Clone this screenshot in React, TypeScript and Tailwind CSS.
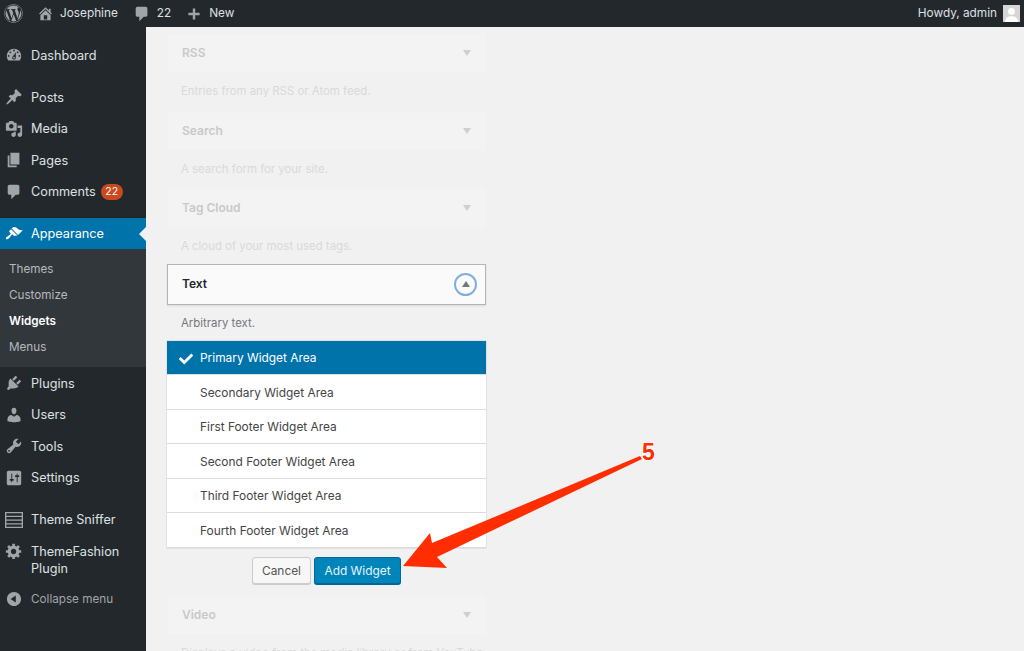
import { FaWordpress, FaCheck } from "react-icons/fa"

const font = { fontFamily: "Inter, sans-serif" }

const paths: Record<string, string> = {
  home: "M16 8.5l1.53 1.53-1.06 1.06L10 4.62l-6.47 6.47-1.06-1.06L10 2.5l4 4v-2h2v4zm-6-2.46l6 5.99V18H4v-5.97zM12 17v-5H8v5h4z",
  comment: "M5 2h9c1.1 0 2 .9 2 2v7c0 1.1-.9 2-2 2h-2l-5 5v-5H5c-1.1 0-2-.9-2-2V4c0-1.1.9-2 2-2z",
  plus: "M17 8.5v3h-5.5V17h-3v-5.5H3v-3h5.5V3h3v5.5z",
  dashboard: "M3.76 16h12.48c1.1-1.37 1.76-3.11 1.76-5 0-4.42-3.58-8-8-8s-8 3.58-8 8c0 1.89.66 3.63 1.76 5zM10 4c.55 0 1 .45 1 1s-.45 1-1 1-1-.45-1-1 .45-1 1-1zM6 6c.55 0 1 .45 1 1s-.45 1-1 1-1-.45-1-1 .45-1 1-1zm8 0c.55 0 1 .45 1 1s-.45 1-1 1-1-.45-1-1 .45-1 1-1zm-5.37 5.55L12 7v6c0 1.1-.9 2-2 2s-2-.9-2-2c0-.57.24-1.08.63-1.45zM4 10c.55 0 1 .45 1 1s-.45 1-1 1-1-.45-1-1 .45-1 1-1zm12 0c.55 0 1 .45 1 1s-.45 1-1 1-1-.45-1-1 .45-1 1-1zm-5 3c0-.55-.45-1-1-1s-1 .45-1 1 .45 1 1 1 1-.45 1-1z",
  post: "M10.44 3.02l1.82-1.82 6.36 6.35-1.83 1.82c-1.05-.68-2.48-.57-3.41.36l-.75.75c-.92.93-1.04 2.35-.35 3.41l-1.83 1.82-2.41-2.41-2.8 2.79c-.42.42-3.38 2.71-3.8 2.29s1.86-3.39 2.28-3.81l2.79-2.79L4.1 9.36l1.83-1.82c1.05.69 2.48.57 3.4-.36l.75-.75c.93-.92 1.05-2.35.36-3.41z",
  media: "M13 11V4c0-.55-.45-1-1-1h-1.67L9 1H5L3.67 3H2c-.55 0-1 .45-1 1v7c0 .55.45 1 1 1h10c.55 0 1-.45 1-1zM7 4.5c1.38 0 2.5 1.12 2.5 2.5S8.38 9.5 7 9.5 4.5 8.38 4.5 7 5.62 4.5 7 4.5zM14 6h5v10.5c0 1.38-1.12 2.5-2.5 2.5S14 17.88 14 16.5s1.12-2.5 2.5-2.5c.17 0 .34.02.5.05V9h-3V6zm-4 8.05V13h2v3.5c0 1.38-1.12 2.5-2.5 2.5S7 17.88 7 16.5 8.12 14 9.5 14c.17 0 .34.02.5.05z",
  page: "M6 15V2h10v13H6zm-1 1h8v2H3V5h2v11z",
  appearance: "M14.48 11.06L7.41 3.99l1.5-1.5c.5-.56 2.3-.47 3.51.32 1.21.8 1.43 1.28 2.91 2.1 1.18.64 2.45 1.26 4.45.85zm-.71.71L6.7 4.7 4.93 6.47c-.39.39-.39 1.02 0 1.41l1.06 1.06c.39.39.39 1.03 0 1.42-.6.6-1.43 1.11-2.21 1.69-.35.26-.7.53-1.01.84C1.43 13.23.4 14.84 1.19 15.63c.79.79 2.4-.24 3.74-1.58.3-.3.58-.65.84-1 .57-.78 1.08-1.61 1.69-2.22.39-.39 1.02-.39 1.41 0l1.06 1.06c.39.39 1.02.39 1.41 0z",
  plugin: "M13.11 4.36L9.87 7.6 8 5.73l3.24-3.24c.35-.34 1.05-.2 1.56.32.52.51.66 1.21.31 1.55zm-8 1.77l.91-1.12 9.01 9.01-1.19.84c-.71.71-2.63 1.16-3.82 1.16H6.14L4.9 17.26c-.59.59-1.54.59-2.12 0-.59-.58-.59-1.53 0-2.12l1.24-1.24v-3.88c0-1.13.4-3.19 1.09-3.89zm7.26 3.97l3.24-3.24c.34-.35 1.04-.21 1.55.31.52.51.66 1.21.31 1.55l-3.24 3.25z",
  users: "M10 9.25c-2.27 0-2.73-3.44-2.73-3.44C7 4.02 7.82 2 9.97 2c2.16 0 2.98 2.02 2.71 3.81 0 0-.41 3.44-2.68 3.44zm0 2.57L12.72 10c2.39 0 4.52 2.33 4.52 4.53v2.49s-3.65 1.13-7.24 1.13c-3.65 0-7.24-1.13-7.24-1.13v-2.49c0-2.25 1.94-4.48 4.47-4.48z",
  tools: "M16.68 9.77c-1.34 1.34-3.3 1.67-4.95.99l-5.41 6.52c-.99.99-2.59.99-3.58 0s-.99-2.59 0-3.57l6.52-5.42c-.68-1.65-.35-3.61.99-4.95 1.28-1.28 3.12-1.62 4.72-1.06l-2.89 2.89 2.82 2.82 2.86-2.87c.53 1.58.18 3.39-1.08 4.65zM3.81 16.21c.4.39 1.04.39 1.43 0 .4-.4.4-1.04 0-1.43-.39-.4-1.03-.4-1.43 0-.39.39-.39 1.03 0 1.43z",
  settings: "M18 16V4c0-1.1-.9-2-2-2H4c-1.1 0-2 .9-2 2v12c0 1.1.9 2 2 2h12c1.1 0 2-.9 2-2zM8 11h1c.55 0 1 .45 1 1s-.45 1-1 1H8v1.5c0 .28-.22.5-.5.5s-.5-.22-.5-.5V13H6c-.55 0-1-.45-1-1s.45-1 1-1h1V5.5c0-.28.22-.5.5-.5s.5.22.5.5V11zm5-2h-1c-.55 0-1-.45-1-1s.45-1 1-1h1V5.5c0-.28.22-.5.5-.5s.5.22.5.5V7h1c.55 0 1 .45 1 1s-.45 1-1 1h-1v5.5c0 .28-.22.5-.5.5s-.5-.22-.5-.5V9z",
  list: "M0 1h20v18H0V1zm1.5 1.5v2.8h17V2.5h-17zm0 4.2v2.8h17V6.7h-17zm0 4.2v2.8h17v-2.8h-17zm0 4.2v2.4h17v-2.4h-17z",
  gear: "M18 12h-2.18c-.17.7-.44 1.35-.81 1.93l1.54 1.54-2.1 2.1-1.54-1.54c-.58.36-1.23.63-1.91.79V19H8v-2.18c-.68-.16-1.33-.43-1.91-.79l-1.54 1.54-2.12-2.12 1.54-1.54c-.36-.58-.63-1.23-.79-1.91H1V9.03h2.17c.16-.7.44-1.35.8-1.94L2.43 5.55l2.1-2.1 1.54 1.54c.58-.37 1.24-.64 1.93-.81V2h3v2.18c.68.16 1.33.43 1.91.79l1.54-1.54 2.12 2.12-1.54 1.54c.36.59.64 1.24.8 1.94H18V12zm-8.5 1.5c1.66 0 3-1.34 3-3s-1.34-3-3-3-3 1.34-3 3 1.34 3 3 3z",
  collapse: "M10 2.16c4.33 0 7.84 3.51 7.84 7.84s-3.51 7.84-7.84 7.84S2.16 14.33 2.16 10 5.71 2.16 10 2.16zm2 11.72V6.12L6.18 9.97z",
}

const Dash = ({ name, className }: { name: string; className: string }) => (
  <svg viewBox="0 0 20 20" fill="currentColor" fillRule="evenodd" className={className}>
    <path d={paths[name]} />
  </svg>
)

const MenuRow = ({ icon, label, active, badge }: { icon: string; label: string; active?: boolean; badge?: string }) => (
  <div className={`relative flex h-[31.5px] items-center pl-[5px] text-[12.7px] ${active ? "bg-[#0073aa] text-white" : "text-[#dfe0e1]"}`}>
    <Dash name={icon} className={`size-[18px] shrink-0 ${active ? "text-white" : "text-[#a0a5aa]"}`} />
    <span className="ml-[8px] pt-[1px]">{label}</span>
    {badge && (
      <span className="ml-[5px] flex h-[16px] w-[22px] items-center justify-center rounded-full bg-[#ca4a1f] text-[10.5px] text-white">{badge}</span>
    )}
    {active && (
      <span className="absolute right-0 top-[9px] size-0 border-y-[7px] border-r-[7px] border-y-transparent border-r-[#f1f1f1]" />
    )}
  </div>
)

const Sidebar = () => (
  <aside className="flex w-[146px] shrink-0 flex-col bg-[#23282d] pt-[12.25px]">
    <MenuRow icon="dashboard" label="Dashboard" />
    <div className="h-[10.5px]" />
    <MenuRow icon="post" label="Posts" />
    <MenuRow icon="media" label="Media" />
    <MenuRow icon="page" label="Pages" />
    <MenuRow icon="comment" label="Comments" badge="22" />
    <div className="h-[10.5px]" />
    <MenuRow icon="appearance" label="Appearance" active />
    <div className="flex flex-col bg-[#32373c] pb-[6px] pl-[9px] pt-[8px] text-[11.7px] text-[#b4b9be]">
      <div className="flex h-[26px] items-center">Themes</div>
      <div className="flex h-[26px] items-center">Customize</div>
      <div className="flex h-[26px] items-center font-semibold text-white">Widgets</div>
      <div className="flex h-[26px] items-center">Menus</div>
    </div>
    <MenuRow icon="plugin" label="Plugins" />
    <MenuRow icon="users" label="Users" />
    <MenuRow icon="tools" label="Tools" />
    <MenuRow icon="settings" label="Settings" />
    <div className="h-[10.5px]" />
    <MenuRow icon="list" label="Theme Sniffer" />
    <div className="flex h-[51px] items-start pl-[5px] pt-[7.5px] text-[12.7px] leading-[17px] text-[#dfe0e1]">
      <Dash name="gear" className="mt-[-1px] size-[18px] shrink-0 text-[#a0a5aa]" />
      <span className="ml-[8px]">
        ThemeFashion
        <br />
        Plugin
      </span>
    </div>
    <div className="flex h-[26px] items-center pl-[5px] text-[11.7px] text-[#a0a5aa]">
      <Dash name="collapse" className="size-[18px] shrink-0" />
      <span className="ml-[8px] pt-[2px]">Collapse menu</span>
    </div>
  </aside>
)

const FadedWidget = ({ title, desc }: { title: string; desc: string }) => (
  <div className="flex h-[77.5px] flex-col">
    <div className="flex h-[40px] shrink-0 items-center justify-between border border-[#f2f2f2] bg-[#f3f3f3] px-[14px] text-[12px] font-semibold text-[#c9c9c9]">
      <span>{title}</span>
      <span className="size-0 border-x-[4px] border-t-[6px] border-x-transparent border-t-[#cdcfd1]" />
    </div>
    <p className="whitespace-nowrap pl-[14px] pt-[10px] text-[11.4px] leading-[16px] text-[#d9d9d9]">{desc}</p>
  </div>
)

const areas = [
  "Primary Widget Area",
  "Secondary Widget Area",
  "First Footer Widget Area",
  "Second Footer Widget Area",
  "Third Footer Widget Area",
  "Fourth Footer Widget Area",
]

const Chooser = () => (
  <ul className="w-[319px] bg-white text-[11.9px] shadow-[0_0_1px_rgba(0,0,0,0.35)]">
    {areas.map((a, i) => (
      <li
        key={a}
        className={`flex h-[34.5px] items-center border-b border-[#dcdcdc] pl-[33px] pt-[2px] ${i === 0 ? "relative border-[#0073aa] bg-[#0073aa] text-white" : "text-[#444]"}`}
      >
        {i === 0 && <FaCheck className="absolute left-[12px] top-[11px] size-[14px] text-white" />}
        {a}
      </li>
    ))}
  </ul>
)

const Arrow = () => (
  <svg className="absolute left-[395px] top-[440px] overflow-visible" width="270" height="140" viewBox="395 440 270 140">
    <polygon fill="#ff2d00" points="403,566 430,533 432,543 640,456 642,459 437,557 447,568" />
  </svg>
)

export default function App() {
  return (
    <div className="relative flex h-[651px] w-[1024px] flex-col overflow-hidden bg-[#f1f1f1]" style={font}>
      <header className="flex h-[27px] shrink-0 items-center bg-[#23282d] text-[11.8px] text-[#dfe0e1]">
        <FaWordpress className="ml-[4px] size-[19px] text-[#a0a5aa]" />
        <Dash name="home" className="ml-[14px] size-[17px] text-[#a0a5aa]" />
        <span className="ml-[6px]">Josephine</span>
        <Dash name="comment" className="ml-[15px] size-[18px] text-[#a0a5aa]" />
        <span className="ml-[6px]">22</span>
        <Dash name="plus" className="ml-[15px] size-[16px] text-[#a0a5aa]" />
        <span className="ml-[7px]">New</span>
        <span className="ml-auto mr-[1px]">Howdy, admin</span>
        <span className="ml-[5px] mr-[4px] flex size-[17px] items-end justify-center overflow-hidden bg-[#d6d6d6]">
          <svg viewBox="0 0 16 16" className="size-[17px]" fill="#fff">
            <circle cx="8" cy="6" r="3.2" />
            <path d="M2 16c0-4 2.5-5.5 6-5.5s6 1.5 6 5.5z" />
          </svg>
        </span>
      </header>
      <div className="flex min-h-0 flex-1">
        <Sidebar />
        <main className="flex flex-col pl-[21px] pt-[6px]">
          <div className="w-[319px]">
            <FadedWidget title="RSS" desc="Entries from any RSS or Atom feed." />
            <FadedWidget title="Search" desc="A search form for your site." />
            <FadedWidget title="Tag Cloud" desc="A cloud of your most used tags." />
            <div className="mt-[-2px] flex h-[41px] items-center justify-between border border-[#b4b4b4] bg-[#fafafa] pl-[14px] pr-[8px] text-[12px] font-semibold text-[#23282d] shadow-[0_1px_2px_rgba(0,0,0,0.1)]">
              <span>Text</span>
              <span className="flex size-[23px] items-center justify-center rounded-full border-2 border-[#7fb0dc]">
                <span className="size-0 border-x-[4px] border-b-[6px] border-x-transparent border-b-[#72777c]" />
              </span>
            </div>
            <p className="pl-[14px] pt-[10px] text-[11.4px] leading-[16px] text-[#72777c]">Arbitrary text.</p>
            <div className="mt-[10px]">
              <Chooser />
            </div>
            <div className="mt-[9.5px] flex justify-end gap-[3px] pr-[85px] text-[11.9px]">
              <button className="h-[27px] w-[59px] rounded-[3px] border border-[#ccc] bg-[#f7f7f7] pt-[1px] text-[#555] shadow-[0_1px_0_#ccc]">Cancel</button>
              <button className="h-[27px] w-[87px] rounded-[3px] border border-[#006799] bg-[#0085ba] pt-[1px] text-[#e8f4fa] shadow-[0_1px_0_#006799]">Add Widget</button>
            </div>
            <div className="mt-[11px]">
              <FadedWidget title="Video" desc="Displays a video from the media library or from YouTube," />
            </div>
          </div>
        </main>
      </div>
      <Arrow />
      <span className="absolute left-[642px] top-[439px] text-[23px] font-bold leading-[26px] text-[#ff2d00] [text-shadow:1px_0_0_#fff,-1px_0_0_#fff,0_1px_0_#fff,0_-1px_0_#fff,1px_1px_1px_#ddd,-1px_1px_0_#fff,1px_-1px_0_#fff,-1px_-1px_0_#fff]" style={{ fontFamily: "Liberation Sans, sans-serif" }}>
        5
      </span>
    </div>
  )
}
